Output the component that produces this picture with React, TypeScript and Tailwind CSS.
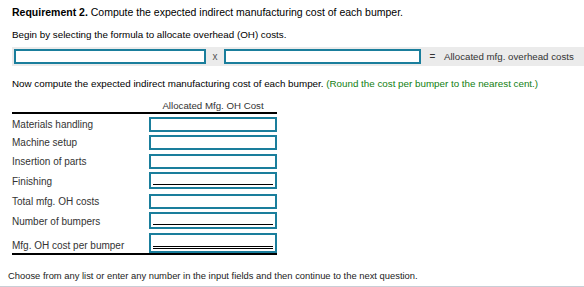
import React from 'react';

type Row = { label: string; h: string; mt: string; lines: 0 | 1 | 2 };

const rows: Row[] = [
  { label: 'Materials handling', h: 'h-[15px]', mt: 'mt-[3px]', lines: 0 },
  { label: 'Machine setup', h: 'h-[15px]', mt: 'mt-[3px]', lines: 0 },
  { label: 'Insertion of parts', h: 'h-[15px]', mt: 'mt-[4px]', lines: 0 },
  { label: 'Finishing', h: 'h-[17px]', mt: 'mt-[3px]', lines: 1 },
  { label: 'Total mfg. OH costs', h: 'h-[15px]', mt: 'mt-[5px]', lines: 0 },
  { label: 'Number of bumpers', h: 'h-[17px]', mt: 'mt-[3px]', lines: 1 },
  { label: 'Mfg. OH cost per bumper', h: 'h-[20px]', mt: 'mt-[4px]', lines: 2 },
];

function Box({ h, lines, w = 'w-[128px]' }: { h: string; lines: 0 | 1 | 2; w?: string }) {
  return (
    <div className={`${w} ${h} border-2 border-[#1a7e9c] bg-white flex flex-col justify-end px-[2px] pb-[2px]`}>
      {lines === 1 && <div className="h-[1px] bg-black" />}
      {lines === 2 && (
        <div className="flex flex-col gap-[1px]">
          <div className="h-[1px] bg-black" />
          <div className="h-[1px] bg-black" />
        </div>
      )}
    </div>
  );
}

export default function App() {
  return (
    <div className="relative w-[584px] h-[287px] bg-white text-black text-[10px] leading-[12px] font-['Liberation_Sans',Arial,sans-serif] overflow-hidden">
      <div className="pl-3 pt-[6px]">
        <p className="text-[10.5px]">
          <span className="font-bold">Requirement 2.</span> Compute the expected indirect manufacturing cost of each bumper.
        </p>
        <p className="mt-[11px] text-[9.8px]">Begin by selecting the formula to allocate overhead (OH) costs.</p>

        <div className="mt-[6px] h-[19px] bg-[#ebebeb] flex items-center pl-[2px]">
          <div className="w-[192px] h-[15px] border-2 border-[#1a7e9c] bg-white" />
          <span className="w-[18px] text-center text-[#555]">x</span>
          <div className="w-[197px] h-[15px] border-2 border-[#1a7e9c] bg-white" />
          <span className="w-[23px] text-center text-[#333]">=</span>
          <span className="text-[9.7px] text-[#333]">Allocated mfg. overhead costs</span>
        </div>

        <p className="mt-[12px] text-[9.8px]">
          Now compute the expected indirect manufacturing cost of each bumper.{' '}
          <span className="text-[#118011]">(Round the cost per bumper to the nearest cent.)</span>
        </p>

        <div className="mt-[10px] w-[265px]">
          <div className="flex border-b-2 border-black">
            <div className="w-[137px]" />
            <div className="w-[128px] text-center text-[9.7px] text-[#333]">Allocated Mfg. OH Cost</div>
          </div>
          {rows.map((r, i) => (
            <div
              key={r.label}
              className={`flex items-end ${r.mt} ${i === rows.length - 1 ? 'border-b-2 border-black' : ''}`}
            >
              <div className="w-[137px] text-[#333] pb-[1px]">{r.label}</div>
              <Box h={r.h} lines={r.lines} />
            </div>
          ))}
        </div>
      </div>

      <p className="absolute left-[8px] top-[270px] text-[9.4px] text-[#222]">
        Choose from any list or enter any number in the input fields and then continue to the next question.
      </p>
      <div className="absolute left-0 right-0 bottom-0 h-[1px] bg-[#c9ced6]" />
    </div>
  );
}
